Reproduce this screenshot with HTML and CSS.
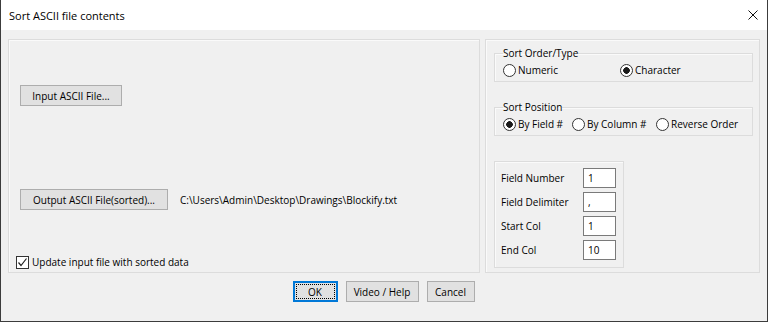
FILE: index.html
```html
<!DOCTYPE html>
<html lang="en">

<head>
  <meta charset="UTF-8">
  <meta name="viewport" content="width=device-width, initial-scale=1.0">
  <title>Sort ASCII file contents</title>
  <link rel="stylesheet" href="styles.css">
</head>

<body>
  <div class="window">
    <div class="titlebar">
      <span class="title">Sort ASCII file contents</span>
      <svg class="close" width="10" height="10" viewBox="0 0 10 10">
        <path d="M0.5 0.5 L9.5 9.5 M9.5 0.5 L0.5 9.5" stroke="#111" stroke-width="1" fill="none" />
      </svg>
    </div>
    <div class="client">
      <div class="panels">
        <div class="panel files">
          <div class="file-row input-row">
            <button class="btn input-btn">Input ASCII File...</button>
          </div>
          <div class="file-row output-row">
            <button class="btn output-btn">Output ASCII File(sorted)...</button>
            <span class="path">C:\Users\Admin\Desktop\Drawings\Blockify.txt</span>
          </div>
          <label class="check">
            <span class="box">
              <svg width="11" height="11" viewBox="0 0 11 11">
                <path d="M1.5 5.5 L4 8.5 L9.5 1.5" stroke="#222" stroke-width="1.2" fill="none" />
              </svg>
            </span>
            Update input file with sorted data
          </label>
        </div>
        <div class="panel options">
          <fieldset class="group order">
            <legend>Sort Order/Type</legend>
            <div class="radios">
              <label class="radio"><span class="dot"></span>Numeric</label>
              <label class="radio on"><span class="dot"></span>Character</label>
            </div>
          </fieldset>
          <fieldset class="group position">
            <legend>Sort Position</legend>
            <div class="radios">
              <label class="radio on"><span class="dot"></span>By Field #</label>
              <label class="radio"><span class="dot"></span>By Column #</label>
              <label class="radio"><span class="dot"></span>Reverse Order</label>
            </div>
          </fieldset>
          <div class="fields">
            <span class="field-label">Field Number</span>
            <input class="edit" value="1">
            <span class="field-label">Field Delimiter</span>
            <input class="edit" value=",">
            <span class="field-label">Start Col</span>
            <input class="edit" value="1">
            <span class="field-label">End Col</span>
            <input class="edit" value="10">
          </div>
        </div>
      </div>
      <div class="actions">
        <button class="btn ok">OK</button>
        <button class="btn help">Video / Help</button>
        <button class="btn cancel">Cancel</button>
      </div>
    </div>
  </div>
</body>

</html>
```

FILE: styles.css
```css
* {
  box-sizing: border-box;
}

body {
  margin: 0;
  font-family: "Open Sans", "Noto Sans", sans-serif;
  font-size: 10px;
  color: #000;
}

.window {
  display: flex;
  flex-direction: column;
  width: 768px;
  height: 322px;
  border: 1px solid #3c3c3c;
  border-top: none;
  background: #f0f0f0;
}

.titlebar {
  display: flex;
  align-items: center;
  justify-content: space-between;
  height: 30px;
  padding: 0 9px 0 8px;
  background: #fff;
}

.title {
  font-size: 11px;
}

.close {
  display: block;
}

.client {
  flex: 1;
  padding: 9px 0 0 7px;
}

.panels {
  display: flex;
  gap: 5px;
}

.panel {
  height: 234px;
  border: 1px solid #dcdcdc;
  box-shadow: inset 1px 1px 0 #fafafa;
}

.files {
  display: flex;
  flex-direction: column;
  width: 472px;
}

.file-row {
  display: flex;
  align-items: center;
  padding-left: 11px;
}

.input-row {
  margin-top: 45px;
}

.output-row {
  margin-top: 83px;
}

.input-btn {
  width: 102px;
}

.output-btn {
  width: 148px;
  height: 22px;
}

.path {
  margin-left: 12px;
}

.btn {
  height: 21px;
  padding: 0;
  border: 1px solid #adadad;
  background: #e1e1e1;
  font: inherit;
  color: #000;
  white-space: nowrap;
}

.check {
  display: flex;
  align-items: center;
  margin-top: auto;
  margin-bottom: 3px;
  padding-left: 7px;
  line-height: 14px;
}

.check .box {
  display: flex;
  align-items: center;
  justify-content: center;
  width: 13px;
  height: 13px;
  margin-right: 3px;
  border: 1px solid #333;
  background: #fff;
}

.options {
  width: 275px;
}

.group {
  margin: 6px 6px 0 8px;
  padding: 3px 0 4px 8px;
  border: 1px solid #dcdcdc;
  box-shadow: inset 1px 1px 0 #fafafa;
}

.group legend {
  padding: 0;
  line-height: 14px;
}

.position {
  margin-top: 18px;
}

.radios {
  display: grid;
  align-items: center;
  line-height: 14px;
}

.order .radios {
  grid-template-columns: 117px auto;
}

.position .radios {
  grid-template-columns: 69px 84px auto;
}

.radio {
  display: flex;
  align-items: center;
  white-space: nowrap;
}

.radio .dot {
  width: 13px;
  height: 13px;
  margin-right: 2px;
  border: 1px solid #333;
  border-radius: 50%;
  background: #fff;
}

.radio.on .dot {
  background: radial-gradient(circle, #1a1a1a 0 3px, #fff 3.6px);
}

.fields {
  display: grid;
  grid-template-columns: 82px 33px;
  align-content: start;
  align-items: center;
  row-gap: 4px;
  width: 130px;
  height: 107px;
  margin: 25px 0 0 8px;
  padding: 6px 0 0 6px;
  border: 1px solid #dcdcdc;
  box-shadow: inset 1px 1px 0 #fafafa;
}

.edit {
  width: 33px;
  height: 20px;
  padding: 0 4px;
  border: 1px solid #7a7a7a;
  background: #fff;
  font: inherit;
  color: #000;
  outline: none;
}

.actions {
  display: flex;
  justify-content: center;
  gap: 8px;
  margin-top: 8px;
  padding-right: 8px;
}

.ok {
  width: 45px;
  border-color: #0078d7;
  box-shadow: inset 0 0 0 1px #0078d7;
  outline: 1px dotted #000;
  outline-offset: -4px;
}

.help {
  width: 73px;
}

.cancel {
  width: 48px;
}
```
